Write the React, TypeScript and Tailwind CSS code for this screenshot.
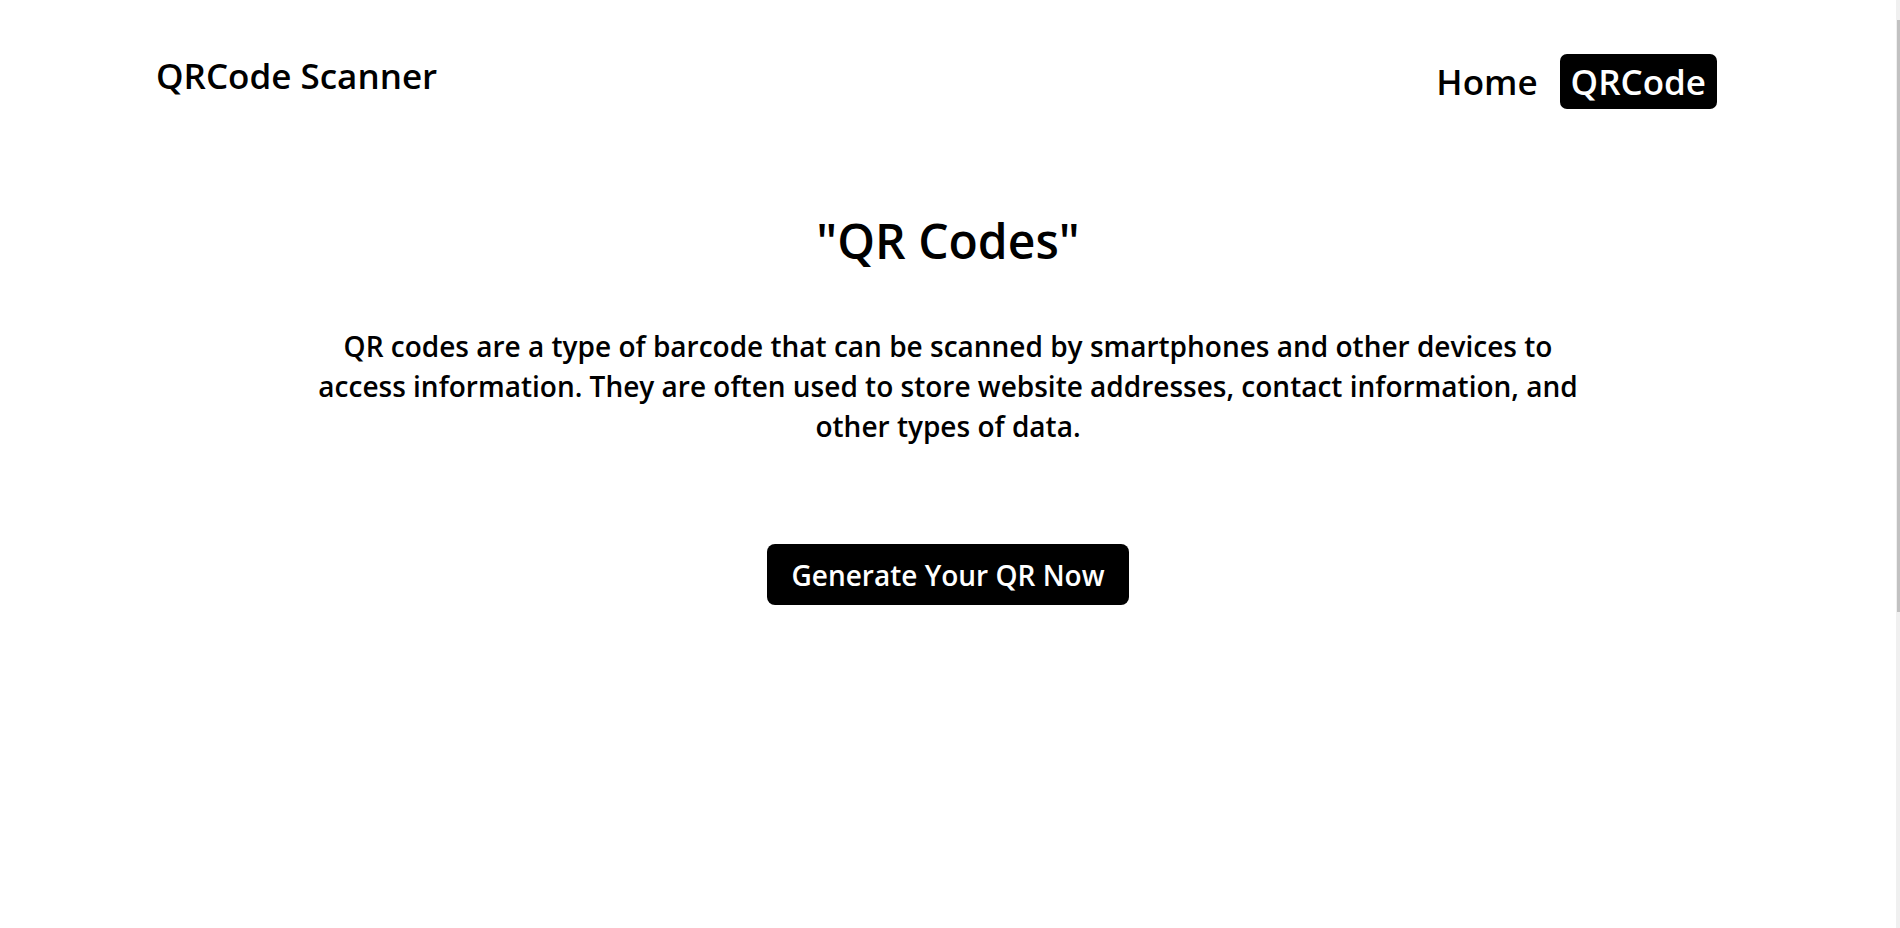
import React from 'react';

const NavBar = () => {
  return (
    <header className="flex items-start justify-between pl-[156px] pr-[179px] pt-[54px]">
      <h2 className="mt-[4px] text-[35px] leading-[35px] font-semibold text-black">
        QRCode Scanner
      </h2>
      <nav className="flex items-start gap-[22px] text-[35px] leading-[35px] font-semibold">
        <a href="#" className="py-[10px] text-black">
          Home
        </a>
        <a href="#" className="py-[10px] px-[11px] rounded-[7px] bg-black text-white">
          QRCode
        </a>
      </nav>
    </header>
  );
};

const Hero = () => {
  return (
    <section className="flex flex-col items-center">
      <h1 className="mt-[108px] text-[48px] leading-[48px] font-semibold text-black">
        "QR Codes"
      </h1>
      <p className="mt-[61px] max-w-[1290px] text-center text-[28px] leading-[40px] font-semibold text-black">
        QR codes are a type of barcode that can be scanned by smartphones and other devices to access
        information. They are often used to store website addresses, contact information, and other
        types of data.
      </p>
      <button className="mt-[98px] rounded-[8px] bg-black px-[24px] pt-[17px] pb-[16px] text-[28px] leading-[28px] font-semibold text-white">
        Generate Your QR Now
      </button>
    </section>
  );
};

export default function App() {
  return (
    <div
      className="flex h-screen w-full bg-white"
      style={{ fontFamily: '"Open Sans", "Noto Sans", sans-serif' }}
    >
      <main className="flex-1">
        <NavBar />
        <Hero />
      </main>
      {/* thin scrollbar on the right */}
      <div className="flex w-[4px] flex-col bg-[#f0f0f0] pt-[20px]">
        <div className="ml-auto h-[592px] w-[3px] bg-[#c1c1c1]" />
      </div>
    </div>
  );
}
